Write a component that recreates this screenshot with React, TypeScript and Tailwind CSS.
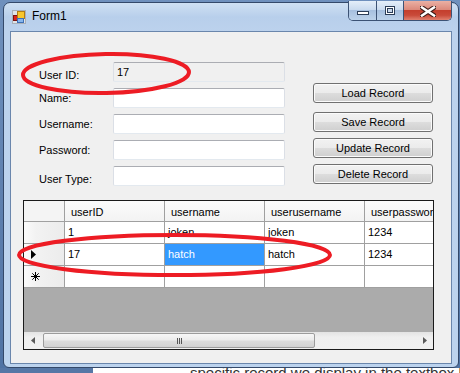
import React from "react";

function TextBox({ value, readOnly }: { value?: string; readOnly?: boolean }) {
  return (
    <div
      className={`w-[172px] h-[20px] rounded-[2px] border border-t-[#abadb3] border-l-[#dbdfe6] border-r-[#dbdfe6] border-b-[#e3e9ef] flex items-center pl-[3px] text-[11px] leading-none ${
        readOnly ? "bg-[#f0f0f0]" : "bg-white"
      }`}
    >
      {value}
    </div>
  );
}

function Btn({ label }: { label: string }) {
  return (
    <div className="w-[120px] h-[20px] rounded-[3px] border border-[#707070] bg-[linear-gradient(180deg,#f2f2f2_0%,#ebebeb_50%,#dddddd_50%,#cfcfcf_100%)] shadow-[inset_0_0_0_1px_#fbfbfb] flex items-center justify-center text-[11px] leading-none">
      {label}
    </div>
  );
}

function Row({ label, children, shift }: { label: string; children: React.ReactNode; shift?: boolean }) {
  return (
    <div className="flex items-center h-[20px]">
      <div className={`w-[74px] text-[11px] leading-none ${shift ? "pt-[6px]" : ""}`}>{label}</div>
      {children}
    </div>
  );
}

const cols = ["userID", "username", "userusername", "userpassword"];
const rows = [
  ["1", "joken", "joken", "1234"],
  ["17", "hatch", "hatch", "1234"],
];

export default function App() {
  return (
    <div className="relative w-[460px] h-[373px] overflow-hidden bg-[linear-gradient(180deg,#6f90bd_0%,#4f72a3_100%)] font-['Liberation_Sans',Arial,sans-serif] text-[11px] text-black">
      <div className="flex flex-col pt-[2px] pl-[3px]">
        <div className="w-[456px] h-[366px] rounded-t-[7px] rounded-b-[6px] border border-[#34496a] bg-[linear-gradient(180deg,#cfe0f3_0px,#b8cfeb_14px,#bcd2ed_29px,#bcd3ee_100%)] flex flex-col px-[6px]">
          {/* title bar */}
          <div className="h-[28px] flex items-start">
            <div className="mt-[7px] ml-[2px]">
              <svg width="14" height="14" viewBox="0 0 14 14">
                <rect x="0.5" y="0.5" width="13" height="13" fill="#dfe3e8" stroke="#a9b0b9" />
                <rect x="1.5" y="5.5" width="4" height="5" fill="#d8261f" stroke="#7d1410" />
                <rect x="5.5" y="1.5" width="7" height="7" fill="#f8c62c" stroke="#b47c12" />
                <rect x="5.5" y="8.5" width="6" height="4" fill="#86b6ec" stroke="#3e70b6" />
              </svg>
            </div>
            <span className="ml-[6px] mt-[6px] text-[12px] leading-[14px] text-black">Form1</span>
            <div className="ml-auto -mt-[2px] flex h-[20px] rounded-b-[5px] border border-t-0 border-[#3c5274] overflow-hidden">
              <div className="w-[28px] h-full border-r border-[#3c5274] bg-[linear-gradient(180deg,#e4eef9_0%,#cadbef_45%,#a7c0df_50%,#bcd2ea_100%)] flex items-start justify-center pt-[10px]">
                <div className="w-[12px] h-[4px] bg-white border border-[#2b3d57]" />
              </div>
              <div className="w-[27px] h-full border-r border-[#3c5274] bg-[linear-gradient(180deg,#e4eef9_0%,#cadbef_45%,#a7c0df_50%,#bcd2ea_100%)] flex items-start justify-center pt-[5px]">
                <div className="w-[10px] h-[9px] border border-[#2b3d57] bg-white p-[1px]">
                  <div className="w-full h-full border border-[#2b3d57] bg-[#c8d8ec]" />
                </div>
              </div>
              <div className="w-[47px] h-full bg-[linear-gradient(180deg,#eab0a4_0%,#dc8a7c_45%,#c43f2e_50%,#c94a39_75%,#e0806f_100%)] flex items-start justify-center pt-[5px]">
                <svg width="16" height="11" viewBox="0 0 16 11">
                  <path d="M2 1.5 L14 9.5 M14 1.5 L2 9.5" stroke="#3a1a16" strokeWidth="4.6" strokeLinecap="square" />
                  <path d="M2 1.5 L14 9.5 M14 1.5 L2 9.5" stroke="#ffffff" strokeWidth="2.6" strokeLinecap="square" />
                </svg>
              </div>
            </div>
          </div>

          {/* client area */}
          <div className="w-[442px] h-[333px] border border-[#6a86ac] bg-[#f0f0f0] flex flex-col pl-[12px] pt-[30px]">
            <div className="flex">
              <div className="flex flex-col gap-[6px] pl-[16px]">
                <Row label="User ID:" shift>
                  <TextBox value="17" readOnly />
                </Row>
                <Row label="Name:">
                  <TextBox />
                </Row>
                <Row label="Username:">
                  <TextBox />
                </Row>
                <Row label="Password:">
                  <TextBox />
                </Row>
                <Row label="User Type:" shift>
                  <TextBox />
                </Row>
              </div>
              <div className="flex flex-col ml-[28px] mt-[21px]">
                <Btn label="Load Record" />
                <div className="mt-[9px] flex flex-col gap-[6px]">
                  <Btn label="Save Record" />
                  <Btn label="Update Record" />
                  <Btn label="Delete Record" />
                </div>
              </div>
            </div>

            {/* data grid */}
            <div className="mt-[14px] w-[411px] h-[150px] border border-[#1a1a1a] flex flex-col bg-[#ababab]">
              {/* header */}
              <div className="flex h-[21px] border-b border-[#a0a0a0] bg-[#f7f7f7]">
                <div className="w-[41px] shrink-0 border-r border-[#a0a0a0] bg-[#f4f4f4]" />
                {cols.map((c, i) => (
                  <div
                    key={c}
                    className={`${i < 3 ? "w-[100px] border-r border-[#a0a0a0]" : "flex-1"} shrink-0 overflow-hidden whitespace-nowrap flex items-center pl-[6px] pt-[2px] bg-[linear-gradient(180deg,#fbfbfb_0%,#f3f3f3_100%)]`}
                  >
                    {c}
                  </div>
                ))}
              </div>
              {rows.map((r, ri) => (
                <div key={ri} className="flex h-[22px] border-b border-[#a0a0a0] bg-white">
                  <div className="w-[41px] shrink-0 border-r border-[#a0a0a0] bg-[linear-gradient(90deg,#fbfbfb_0%,#f2f2f2_30%,#ececec_100%)] flex items-center pl-[7px]">
                    {ri === 1 && (
                      <svg width="5" height="9" viewBox="0 0 5 9">
                        <path d="M0 0 L5 4.5 L0 9 Z" fill="#000" />
                      </svg>
                    )}
                  </div>
                  {r.map((v, ci) => {
                    const sel = ri === 1 && ci === 1;
                    return (
                      <div
                        key={ci}
                        className={`${ci < 3 ? "w-[100px] border-r border-[#a0a0a0]" : "flex-1"} shrink-0 overflow-hidden whitespace-nowrap flex items-center pl-[3px] ${
                          sel ? "bg-[#3399ff] text-white" : ""
                        }`}
                      >
                        {v}
                      </div>
                    );
                  })}
                </div>
              ))}
              {/* new row */}
              <div className="flex h-[22px] border-b border-[#a0a0a0] bg-white">
                <div className="w-[41px] shrink-0 border-r border-[#a0a0a0] bg-[linear-gradient(90deg,#fbfbfb_0%,#f2f2f2_30%,#ececec_100%)] flex items-center pl-[7px]">
                  <svg width="9" height="9" viewBox="0 0 9 9">
                    <path d="M4.5 0 V9 M0 4.5 H9 M1.3 1.3 L7.7 7.7 M7.7 1.3 L1.3 7.7" stroke="#000" strokeWidth="1" />
                  </svg>
                </div>
                <div className="w-[100px] shrink-0 border-r border-[#a0a0a0]" />
                <div className="w-[100px] shrink-0 border-r border-[#a0a0a0]" />
                <div className="w-[100px] shrink-0 border-r border-[#a0a0a0]" />
                <div className="flex-1" />
              </div>
              <div className="flex-1" />
              {/* horizontal scrollbar */}
              <div className="h-[17px] flex items-center bg-[linear-gradient(180deg,#e3e3e3_0%,#efefef_30%,#f0f0f0_100%)]">
                <div className="w-[17px] h-full flex items-center justify-center">
                  <svg width="4" height="7" viewBox="0 0 4 7">
                    <path d="M4 0 L0 3.5 L4 7 Z" fill="#5a5a5a" />
                  </svg>
                </div>
                <div className="ml-[2px] w-[272px] h-[15px] rounded-[2px] border border-[#9c9c9c] bg-[linear-gradient(180deg,#f7f7f7_0%,#ececec_45%,#dcdcdc_55%,#d2d2d2_100%)] flex items-center justify-center gap-[1px]">
                  <div className="w-[1px] h-[6px] bg-[#555]" />
                  <div className="w-[1px] h-[6px] bg-[#555]" />
                  <div className="w-[1px] h-[6px] bg-[#555]" />
                </div>
                <div className="flex-1" />
                <div className="w-[17px] h-full flex items-center justify-center">
                  <svg width="4" height="7" viewBox="0 0 4 7">
                    <path d="M0 0 L4 3.5 L0 7 Z" fill="#5a5a5a" />
                  </svg>
                </div>
              </div>
            </div>
          </div>
        </div>
        {/* background strip beneath the window */}
        <div className="flex h-[5px] -ml-[3px] overflow-hidden">
          <div className="w-[93px] bg-[#5677a6]" />
          <div className="flex-1 bg-white overflow-hidden pl-[97px]">
            <div className="-mt-[3px] text-[15px] leading-[15px] text-[#333] whitespace-nowrap">
              specific record we display in the textbox like a
            </div>
          </div>
        </div>
      </div>

      {/* red hand-drawn ellipses */}
      <svg className="absolute inset-0 pointer-events-none" width="460" height="373" viewBox="0 0 460 373">
        <ellipse cx="106" cy="73.5" rx="83" ry="19.5" fill="none" stroke="#ed1c24" strokeWidth="4" transform="rotate(-1 106 73.5)" />
        <ellipse cx="174.5" cy="255" rx="155.5" ry="20" fill="none" stroke="#ed1c24" strokeWidth="4" />
      </svg>
    </div>
  );
}
